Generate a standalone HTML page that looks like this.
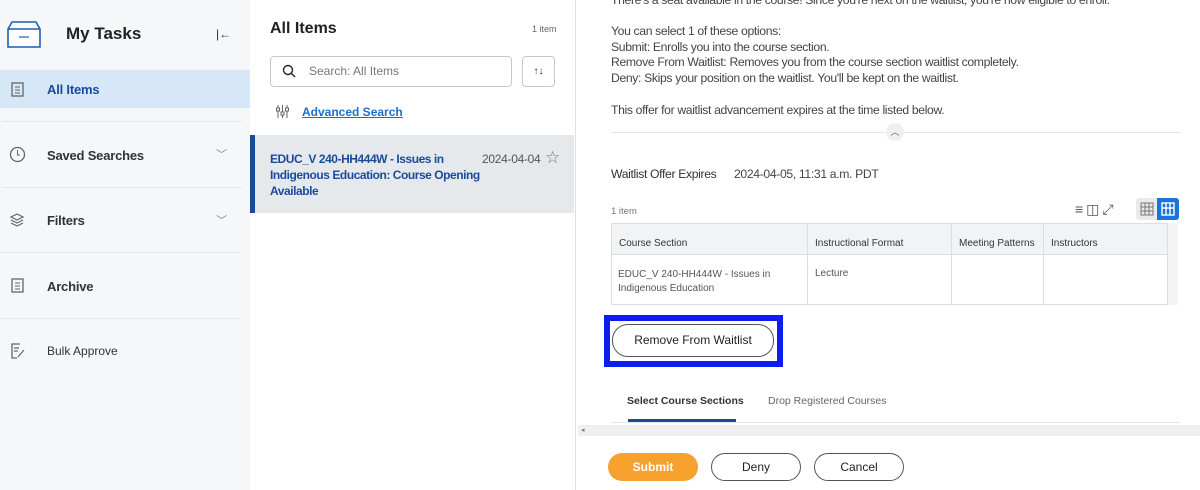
<!DOCTYPE html>
<html><head><meta charset="utf-8">
<style>
*{margin:0;padding:0;box-sizing:border-box}
body{width:1200px;height:490px;overflow:hidden;background:#fff;font-family:"Liberation Sans",Arial,sans-serif;position:relative;color:#333}
.a{position:absolute}
.side{left:0;top:0;width:250px;height:490px;background:#f6f7f9}
.nav{left:0;width:250px;font-size:13px;font-weight:bold;color:#333;letter-spacing:-0.2px}
.sep{height:1px;background:#e3e5e8;left:0;width:240px}
.t{font-size:12.2px;color:#444;white-space:nowrap;letter-spacing:-0.35px}
.btn{border:1px solid #555;border-radius:16px;background:#fff;font-size:12px;text-align:center;color:#222}
</style></head><body>
<div class="a side"></div>
<svg class="a" style="left:7px;top:20px" width="34" height="28" viewBox="0 0 34 28"><path d="M1 9 L5 2 H29 L33 9 V27 H1 Z M1 9 H33" fill="#fff" stroke="#1f5fae" stroke-width="1.6"/><path d="M12 17 H22" stroke="#1f5fae" stroke-width="1.2"/></svg>
<div class="a" style="left:66px;top:24px;font-size:17px;font-weight:bold;color:#222">My Tasks</div>
<div class="a" style="left:216px;top:27px;font-size:12px;color:#333">|←</div>
<div class="a" style="left:0;top:70px;width:250px;height:38px;background:#d6e7f8"></div>
<svg class="a" style="left:11px;top:81px" width="13" height="16"><rect x="1" y="2" width="11" height="13" fill="none" stroke="#666" stroke-width="1.3"/><path d="M4 6H9M4 9H9M4 12H9" stroke="#666"/></svg>
<div class="a nav" style="top:82px;left:47px;color:#1a4b9a">All Items</div>
<div class="a sep" style="top:121px;left:2px"></div>
<svg class="a" style="left:9px;top:146px" width="17" height="17"><circle cx="8.5" cy="8.5" r="7" fill="none" stroke="#666" stroke-width="1.3"/><path d="M8.5 4V9H11" stroke="#666" fill="none"/></svg>
<div class="a nav" style="top:148px;left:47px">Saved Searches</div>
<div class="a" style="left:216px;top:146px;font-size:11px;color:#888">﹀</div>
<div class="a sep" style="top:187px;left:2px"></div>
<svg class="a" style="left:9px;top:212px" width="16" height="16"><path d="M8 2L14 5 8 8 2 5Z M2 8L8 11 14 8 M2 11L8 14 14 11" fill="none" stroke="#666" stroke-width="1.2"/></svg>
<div class="a nav" style="top:213px;left:47px">Filters</div>
<div class="a" style="left:216px;top:212px;font-size:11px;color:#888">﹀</div>
<div class="a sep" style="top:252px;left:0"></div>
<svg class="a" style="left:11px;top:277px" width="13" height="16"><rect x="1" y="2" width="11" height="13" fill="none" stroke="#666" stroke-width="1.3"/><path d="M4 6H9M4 9H9M4 12H9" stroke="#666"/></svg>
<div class="a nav" style="top:279px;left:47px">Archive</div>
<div class="a sep" style="top:318px;left:0"></div>
<svg class="a" style="left:10px;top:342px" width="16" height="17"><path d="M10 2H2V16H7" fill="none" stroke="#666" stroke-width="1.3"/><path d="M4 6H9M4 9H8M8 15L14 8" stroke="#666" stroke-width="1.2"/></svg>
<div class="a" style="top:344px;left:47px;font-size:12px;color:#333">Bulk Approve</div>

<div class="a" style="left:575px;top:0;width:1px;height:490px;background:#e0e0e0"></div>
<div class="a" style="left:270px;top:20px;font-size:16px;font-weight:bold;color:#222">All Items</div>
<div class="a" style="left:532px;top:24px;font-size:9px;color:#666">1 item</div>
<div class="a" style="left:270px;top:56px;width:242px;height:31px;border:1px solid #c8c8c8;border-radius:4px"></div>
<svg class="a" style="left:282px;top:64px" width="15" height="15"><circle cx="6" cy="6" r="4.5" fill="none" stroke="#222" stroke-width="1.4"/><path d="M9.5 9.5L13 13" stroke="#222" stroke-width="1.4"/></svg>
<div class="a" style="left:309px;top:64px;font-size:12px;color:#777">Search: All Items</div>
<div class="a" style="left:522px;top:56px;width:33px;height:31px;border:1px solid #c8c8c8;border-radius:4px;font-size:10px;text-align:center;line-height:29px;color:#222">↑↓</div>
<svg class="a" style="left:275px;top:104px" width="15" height="15"><path d="M3 1V14M7.5 1V14M12 1V14" stroke="#666"/><rect x="1.5" y="4" width="3" height="3" fill="#fff" stroke="#666"/><rect x="6" y="8" width="3" height="3" fill="#fff" stroke="#666"/><rect x="10.5" y="4" width="3" height="3" fill="#fff" stroke="#666"/></svg>
<div class="a" style="left:302px;top:105px;font-size:12px;font-weight:bold;color:#1a6fd0;text-decoration:underline">Advanced Search</div>
<div class="a" style="left:250px;top:135px;width:324px;height:78px;background:#e6e9ec;border-left:5px solid #1a4b9a"></div>
<div class="a" style="left:270px;top:151px;width:210px;font-size:12px;font-weight:bold;color:#1a4b9a;line-height:16px;letter-spacing:-0.45px;white-space:nowrap">EDUC_V 240-HH444W - Issues in<br>Indigenous Education: Course Opening<br>Available</div>
<div class="a" style="left:482px;top:152px;font-size:12px;color:#555;letter-spacing:-0.3px">2024-04-04</div>
<div class="a" style="left:545px;top:148px;font-size:17px;color:#777">☆</div>

<div class="a t" style="left:611px;top:-7px">There's a seat available in the course! Since you're next on the waitlist, you're now eligible to enroll.</div>
<div class="a t" style="left:611px;top:24px;line-height:15.7px">You can select 1 of these options:<br>Submit: Enrolls you into the course section.<br>Remove From Waitlist: Removes you from the course section waitlist completely.<br>Deny: Skips your position on the waitlist. You'll be kept on the waitlist.</div>
<div class="a t" style="left:611px;top:103px">This offer for waitlist advancement expires at the time listed below.</div>
<div class="a" style="left:611px;top:132px;width:569px;height:1px;background:#e6e6e6"></div>
<div class="a" style="left:886px;top:123px;width:18px;height:18px;border-radius:9px;background:#eef0f2;font-size:9px;text-align:center;line-height:18px;color:#666">︿</div>
<div class="a t" style="left:611px;top:167px;color:#333">Waitlist Offer Expires</div>
<div class="a t" style="left:734px;top:167px">2024-04-05, 11:31 a.m. PDT</div>
<div class="a" style="left:611px;top:206px;font-size:9.5px;color:#777">1 item</div>
<div class="a" style="left:1075px;top:201px;font-size:14px;color:#555;letter-spacing:3px">≡◫⤢</div>
<div class="a" style="left:1136px;top:198px;width:22px;height:22px;background:#e8eaec;border-radius:3px 0 0 3px"></div>
<div class="a" style="left:1157px;top:198px;width:22px;height:22px;background:#1e73d8;border-radius:0 3px 3px 0"></div>
<svg class="a" style="left:1140px;top:202px" width="14" height="14"><rect x="1" y="1" width="12" height="12" fill="none" stroke="#777"/><path d="M1 5H13M1 9H13M5 1V13M9 1V13" stroke="#777"/></svg>
<svg class="a" style="left:1161px;top:202px" width="14" height="14"><rect x="1" y="1" width="12" height="12" fill="none" stroke="#fff" stroke-width="1.4"/><path d="M1 6H13M5 1V13M9 1V13" stroke="#fff" stroke-width="1.4"/></svg>
<div class="a" style="left:611px;top:223px;width:557px;height:82px;border:1px solid #ddd"></div>
<div class="a" style="left:612px;top:224px;width:555px;height:31px;background:#f2f3f4;border-bottom:1px solid #ddd"></div>
<div class="a" style="left:807px;top:224px;width:1px;height:80px;background:#ddd"></div>
<div class="a" style="left:951px;top:224px;width:1px;height:80px;background:#ddd"></div>
<div class="a" style="left:1043px;top:224px;width:1px;height:80px;background:#ddd"></div>
<div class="a" style="left:1168px;top:223px;width:10px;height:82px;background:#f4f4f4"></div>
<div class="a" style="left:619px;top:238px;font-size:10px;color:#333">Course Section</div>
<div class="a" style="left:815px;top:238px;font-size:10px;color:#333">Instructional Format</div>
<div class="a" style="left:959px;top:238px;font-size:10px;color:#333">Meeting Patterns</div>
<div class="a" style="left:1051px;top:238px;font-size:10px;color:#333">Instructors</div>
<div class="a" style="left:618px;top:268px;font-size:10px;color:#555;line-height:13.5px">EDUC_V 240-HH444W - Issues in<br>Indigenous Education</div>
<div class="a" style="left:815px;top:268px;font-size:10px;color:#555">Lecture</div>
<div class="a" style="left:604px;top:315px;width:179px;height:52px;border:6px solid #0a1ef0"></div>
<div class="a btn" style="left:612px;top:324px;width:162px;height:33px;line-height:31px">Remove From Waitlist</div>
<div class="a" style="left:627px;top:395px;font-size:10.5px;font-weight:bold;color:#333">Select Course Sections</div>
<div class="a" style="left:768px;top:395px;font-size:10.5px;color:#666">Drop Registered Courses</div>
<div class="a" style="left:611px;top:422px;width:569px;height:1px;background:#e6e6e6"></div>
<div class="a" style="left:628px;top:419px;width:108px;height:3px;background:#1a4b9a"></div>
<div class="a" style="left:578px;top:425px;width:622px;height:11px;background:#efefef;font-size:7px;color:#777;padding-left:3px;line-height:11px">◂</div>
<div class="a btn" style="left:608px;top:453px;width:90px;height:28px;line-height:28px;background:#f7a12f;border:none;color:#fff;font-weight:bold">Submit</div>
<div class="a btn" style="left:711px;top:453px;width:90px;height:28px;line-height:26px">Deny</div>
<div class="a btn" style="left:814px;top:453px;width:90px;height:28px;line-height:26px">Cancel</div>
</body></html>
